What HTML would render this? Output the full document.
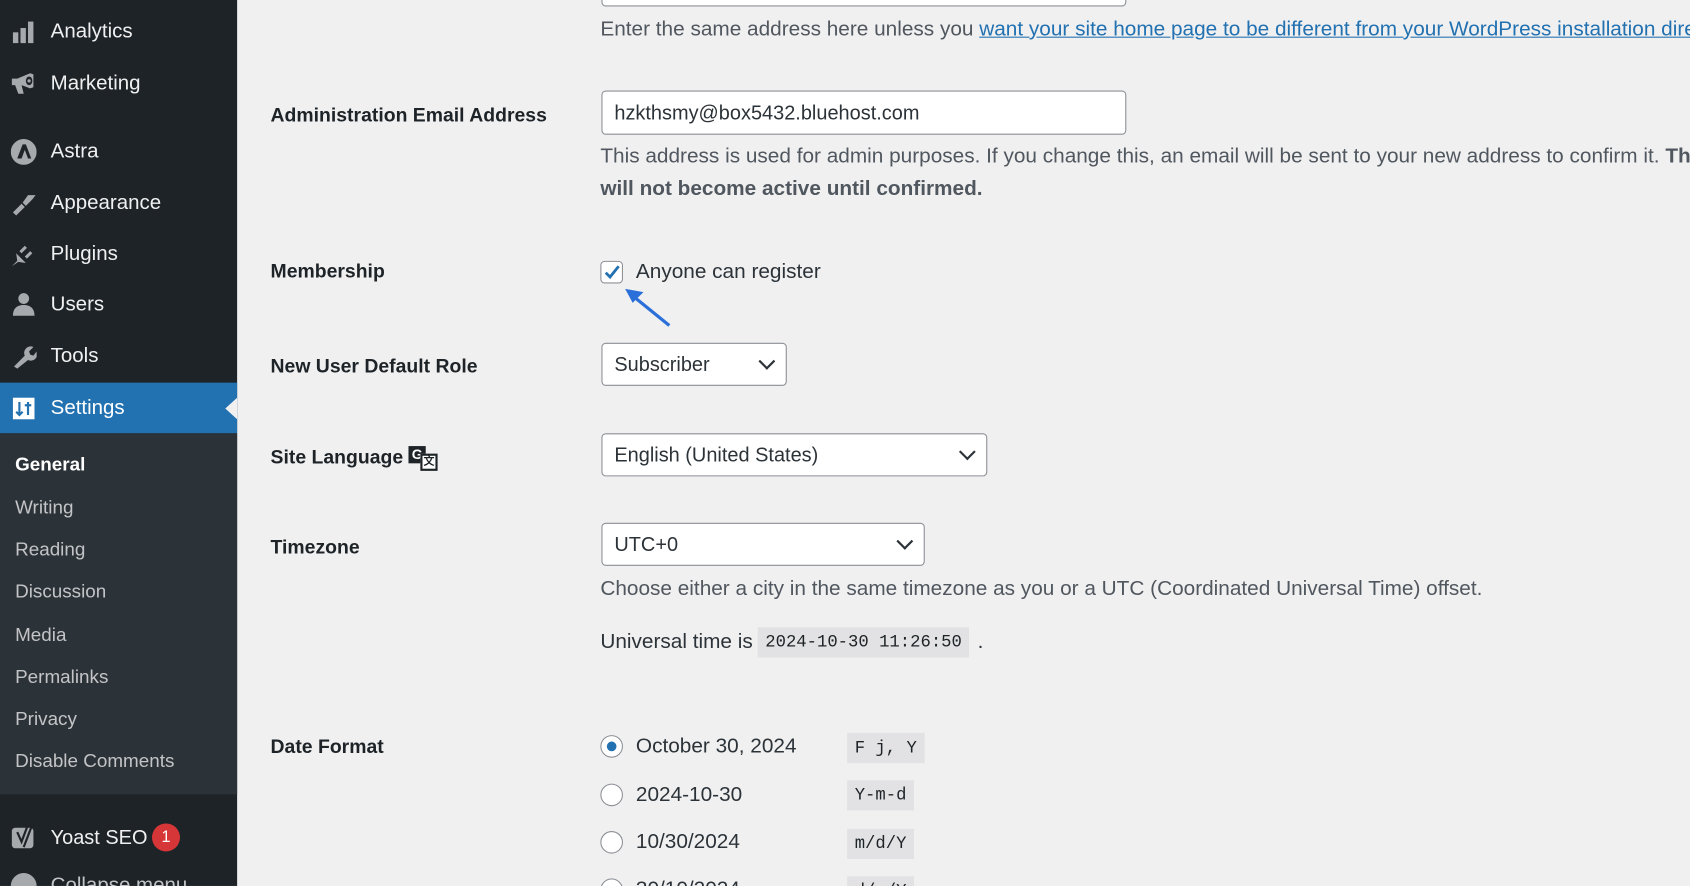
<!DOCTYPE html>
<html><head><meta charset="utf-8"><style>
html,body{margin:0;padding:0;width:1690px;height:886px;overflow:hidden;background:#f0f0f1}
#w{position:absolute;left:0;top:0;width:1568px;height:822px;transform:scale(1.07781);transform-origin:0 0;font-family:"Liberation Sans",sans-serif;overflow:hidden}
.sb{position:absolute;left:0;top:0;width:220px;height:822px;background:#1d2327}
.mi{position:absolute;left:47px;color:#f0f0f1;font-size:19px;transform:translateY(-50%)}
.ic{position:absolute;left:10px;width:24px;height:24px;transform:translateY(-50%)}
.sub{position:absolute;left:0;top:402px;width:220px;height:335px;background:#2c3338}
.si{position:absolute;left:14px;color:#c3c4c7;font-size:17.5px;transform:translateY(-50%)}
.lb{position:absolute;left:251px;color:#1d2327;font-size:18px;font-weight:bold;transform:translateY(-50%)}
.t{position:absolute;color:#50575e;font-size:19.3px;transform:translateY(-50%);white-space:nowrap}
.in{position:absolute;background:#fff;border:1px solid #8c8f94;border-radius:4px;box-sizing:border-box;font-size:18.5px;color:#2c3338;padding-left:11px;display:flex;align-items:center}
.chev{position:absolute;right:12px;top:50%;width:9px;height:9px;border-right:2px solid #2c3338;border-bottom:2px solid #2c3338;transform:translateY(-75%) rotate(45deg)}
.code{position:absolute;background:#e2e2e4;font-family:"Liberation Mono",monospace;font-size:16px;color:#1d2327;padding:0 7px;height:28px;line-height:28px}
.rad{position:absolute;left:557px;width:21px;height:21px;border:1px solid #8c8f94;border-radius:50%;background:#fff;box-sizing:border-box}
</style></head><body><div id="w">
<div class="sb"></div>
<svg class="ic" style="top:30px" viewBox="0 0 24 24"><rect x="2" y="12" width="5" height="10" fill="#a7aaad"/><rect x="9" y="8" width="5" height="14" fill="#a7aaad"/><rect x="16" y="2" width="5" height="20" fill="#a7aaad"/></svg>
<div class="mi" style="top:30px">Analytics</div>
<svg class="ic" style="top:78px" viewBox="0 0 24 24"><path d="M1 7h5l12-5 3 1v12l-3 1-8-3 2 8H7l-3-8H1z" fill="#a7aaad"/><ellipse cx="17" cy="9" rx="3" ry="4" fill="#1d2327"/><circle cx="17" cy="9" r="1.5" fill="#a7aaad"/></svg>
<div class="mi" style="top:78px">Marketing</div>
<svg class="ic" style="top:141px" viewBox="0 0 24 24"><circle cx="12" cy="12" r="12" fill="#a7aaad"/><path d="M11 5h3l5 13h-3l-3-8-3 8H6z" fill="#1d2327"/></svg>
<div class="mi" style="top:141px">Astra</div>
<svg class="ic" style="top:189px" viewBox="0 0 24 24"><path d="M2 20l8-8 3 3-8 8zM11 11l5-7h7l-3 4-6 6z" fill="#a7aaad"/></svg>
<div class="mi" style="top:189px">Appearance</div>
<svg class="ic" style="top:236px" viewBox="0 0 24 24"><path d="M1 23l5-5-1-7 9 9-7-1zM8 9l5-5 2 2-5 5zm5 5l5-5 2 2-5 5z" fill="#a7aaad"/></svg>
<div class="mi" style="top:236px">Plugins</div>
<svg class="ic" style="top:283px" viewBox="0 0 24 24"><circle cx="12" cy="6" r="5" fill="#a7aaad"/><path d="M2 22c0-7 4-10 10-10s10 3 10 10z" fill="#a7aaad"/></svg>
<div class="mi" style="top:283px">Users</div>
<svg class="ic" style="top:331px" viewBox="0 0 24 24"><path d="M3 21l10-10a6 6 0 0 1 8-8l-4 4 1 3 3 1 3-4a6 6 0 0 1-8 8L6 23z" fill="#a7aaad"/></svg>
<div class="mi" style="top:331px">Tools</div>
<div style="position:absolute;left:0;top:355px;width:220px;height:47px;background:#2271b1"></div>
<div style="position:absolute;left:209px;top:369px;width:0;height:0;border-top:10px solid transparent;border-bottom:10px solid transparent;border-right:11px solid #f0f0f1"></div>
<svg class="ic" style="top:379px" viewBox="0 0 24 24"><rect x="2" y="2" width="20" height="20" fill="#fff"/><path d="M8 6v12M5 15l3 3 3-3M16 18V6M13 9h6" stroke="#2271b1" stroke-width="2" fill="none"/></svg>
<div class="mi" style="top:379px;color:#fff">Settings</div>
<div class="sub"></div>
<div class="si" style="top:431px;color:#fff;font-weight:bold">General</div>
<div class="si" style="top:471px">Writing</div>
<div class="si" style="top:510px">Reading</div>
<div class="si" style="top:549px">Discussion</div>
<div class="si" style="top:589px">Media</div>
<div class="si" style="top:628px">Permalinks</div>
<div class="si" style="top:667px">Privacy</div>
<div class="si" style="top:706px">Disable Comments</div>
<svg class="ic" style="top:776px" viewBox="0 0 24 24"><rect x="1" y="4" width="20" height="19" rx="3" fill="#a7aaad"/><path d="M6 8l4 9 6-16h4L12 22" stroke="#1d2327" stroke-width="2" fill="none"/></svg>
<div class="mi" style="top:777px;font-size:18.5px">Yoast SEO</div>
<div style="position:absolute;left:141px;top:764px;width:26px;height:26px;border-radius:50%;background:#d63638;color:#fff;font-size:15px;text-align:center;line-height:26px">1</div>
<div style="position:absolute;left:10px;top:810px;width:24px;height:24px;border-radius:50%;background:#a7aaad"></div>
<div class="mi" style="top:822px;color:#c3c4c7">Collapse menu</div>

<div class="in" style="left:558px;top:-35px;width:487px;height:41px"></div>
<div class="t" style="left:557px;top:28px">Enter the same address here unless you <span style="color:#2271b1;text-decoration:underline">want your site home page to be different from your WordPress installation directory</span></div>
<div class="lb" style="top:107px">Administration Email Address</div>
<div class="in" style="left:558px;top:84px;width:487px;height:41px">hzkthsmy@box5432.bluehost.com</div>
<div class="t" style="left:557px;top:146px">This address is used for admin purposes. If you change this, an email will be sent to your new address to confirm it. <b>The new address</b></div>
<div class="t" style="left:557px;top:176px;font-weight:bold">will not become active until confirmed.</div>
<div class="lb" style="top:252px">Membership</div>
<div style="position:absolute;left:557px;top:242px;width:21px;height:21px;border:1px solid #8c8f94;border-radius:4px;background:#fff;box-sizing:border-box"></div>
<svg style="position:absolute;left:557px;top:242px" width="21" height="21"><path d="M5 11l4 4 8-10" stroke="#2271b1" stroke-width="2.6" fill="none"/></svg>
<div class="t" style="left:590px;top:253px;color:#2c3338">Anyone can register</div>
<svg style="position:absolute;left:576px;top:264px" width="50" height="42"><path d="M45 38L8 8" stroke="#2b6fd9" stroke-width="3"/><path d="M4 4l17 3-10 10z" fill="#2b6fd9"/></svg>
<div class="lb" style="top:340px">New User Default Role</div>
<div class="in" style="left:558px;top:318px;width:172px;height:40px">Subscriber<span class="chev"></span></div>
<div class="lb" style="top:425px">Site Language <span style="display:inline-block;width:27px;height:22px;vertical-align:middle;font-size:13px;position:relative"><span style="position:absolute;left:0;top:0;background:#1d2327;color:#fff;width:16px;height:16px;text-align:center;line-height:16px">G</span><span style="position:absolute;left:11px;top:7px;background:#fff;border:2px solid #1d2327;color:#1d2327;width:12px;height:12px;line-height:12px;text-align:center;font-size:10px">文</span></span></div>
<div class="in" style="left:558px;top:402px;width:358px;height:40px">English (United States)<span class="chev"></span></div>
<div class="lb" style="top:508px">Timezone</div>
<div class="in" style="left:558px;top:485px;width:300px;height:40px">UTC+0<span class="chev"></span></div>
<div class="t" style="left:557px;top:547px">Choose either a city in the same timezone as you or a UTC (Coordinated Universal Time) offset.</div>
<div class="t" style="left:557px;top:596px;color:#2c3338">Universal time is</div>
<div class="code" style="left:703px;top:582px">2024-10-30 11:26:50</div>
<div class="t" style="left:907px;top:596px;color:#2c3338">.</div>
<div class="lb" style="top:693px">Date Format</div>
<div class="rad" style="top:682px"><div style="position:absolute;left:5px;top:5px;width:9px;height:9px;border-radius:50%;background:#2271b1"></div></div>
<div class="t" style="left:590px;top:693px;color:#2c3338">October 30, 2024</div>
<div class="code" style="left:786px;top:680px">F j, Y</div>
<div class="rad" style="top:727px"></div>
<div class="t" style="left:590px;top:738px;color:#2c3338">2024-10-30</div>
<div class="code" style="left:786px;top:724px">Y-m-d</div>
<div class="rad" style="top:771px"></div>
<div class="t" style="left:590px;top:782px;color:#2c3338">10/30/2024</div>
<div class="code" style="left:786px;top:769px">m/d/Y</div>
<div class="rad" style="top:815px"></div>
<div class="t" style="left:590px;top:826px;color:#2c3338">30/10/2024</div>
<div class="code" style="left:786px;top:813px">d/m/Y</div>
</div></body></html>
